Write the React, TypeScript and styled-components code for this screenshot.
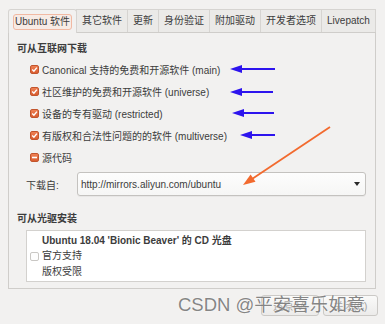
import * as React from 'react'
import styled, { createGlobalStyle } from 'styled-components';

const GlobalStyle = createGlobalStyle`
    body {
        margin: 0;
        background: #f2f1f0;
        font-family: "Liberation Sans", "Noto Sans CJK SC", sans-serif;
        font-size: 10px;
        color: #3c3c3c;
    }
`;

const Window = styled.div`
    position: relative;
    width: 385px;
    height: 324px;
    box-sizing: border-box;
    padding: 9px 0 0 8px;
    overflow: hidden;
`;

const TabBar = styled.div`
    display: flex;
    height: 23px;
`;

const Tab = styled.div<{ $active?: boolean }>`
    display: flex;
    align-items: center;
    box-sizing: border-box;
    padding: 0 ${p => (p.$active ? '4px' : '5px')};
    margin-right: -1px;
    border: 1px solid #d6d4d1;
    border-bottom: none;
    border-radius: ${p => (p.$active ? '3px 3px 0 0' : '0')};
    background: ${p => (p.$active ? '#f2f1f0' : '#ebeae8')};
    line-height: 12px;
    white-space: nowrap;
    position: relative;
    z-index: ${p => (p.$active ? 1 : 0)};
    margin-bottom: ${p => (p.$active ? '-1px' : '0')};
`;

const FocusRing = styled.span`
    padding: 1px 1px;
    border: 1px solid #f1b9a3;
    border-radius: 3px;
    background: #f7ebe5;
`;

const Panel = styled.div`
    width: 368px;
    box-sizing: border-box;
    border: 1px solid #cfcdca;
    padding: 10px 9px 6px 8px;
`;

const Heading = styled.div<{ $gap?: number }>`
    font-weight: bold;
    line-height: 12px;
    margin-top: ${p => p.$gap || 0}px;
`;

const CheckList = styled.div`
    margin-top: 3px;
    padding-left: 13px;
`;

const CheckRow = styled.div`
    display: flex;
    align-items: center;
    height: 22px;
    gap: 3px;
    white-space: nowrap;
`;

const Box = styled.span<{ $on?: boolean }>`
    display: inline-flex;
    align-items: center;
    justify-content: center;
    width: 9px;
    height: 9px;
    box-sizing: border-box;
    border-radius: 2px;
    border: 1px solid ${p => (p.$on ? '#c2552d' : '#c9c7c4')};
    background: ${p => (p.$on ? 'linear-gradient(#ef8053, #d95d30)' : '#fdfdfd')};
    flex: none;
`;

const SourceRow = styled.div`
    display: flex;
    align-items: center;
    margin-top: 4px;
    padding-left: 9px;
`;

const SourceLabel = styled.span`
    width: 51px;
    flex: none;
`;

const Dropdown = styled.div`
    flex: 1;
    height: 24px;
    box-sizing: border-box;
    display: flex;
    align-items: center;
    justify-content: space-between;
    padding: 0 5px 0 3px;
    border: 1px solid #c4c2bf;
    border-radius: 3px;
    background: linear-gradient(#fdfdfd, #f6f6f5);
    box-shadow: 0 1px 0 rgba(0, 0, 0, 0.04);
`;

const Caret = styled.span`
    width: 0;
    height: 0;
    border-left: 3.5px solid transparent;
    border-right: 3.5px solid transparent;
    border-top: 4px solid #2a2a2a;
`;

const ListBox = styled.div`
    margin: 5px 0 0 9px;
    height: 52px;
    box-sizing: border-box;
    border: 1px solid #d3d1ce;
    background: #ffffff;
    display: flex;
    align-items: center;
    padding-left: 3px;
    gap: 3px;
`;

const MediaLines = styled.div`
    line-height: 15.5px;
`;

const MediaTitle = styled.div`
    font-weight: bold;
`;

const ButtonBar = styled.div`
    display: flex;
    justify-content: flex-end;
    gap: 4px;
    margin-top: 6px;
    padding-right: 7px;
`;

const Button = styled.div<{ $w: number }>`
    width: ${p => p.$w}px;
    height: 21px;
    box-sizing: border-box;
    display: flex;
    align-items: center;
    justify-content: center;
    border: 1px solid #cbc9c6;
    border-radius: 3px;
    background: linear-gradient(#fafaf9, #ecebea);
    color: #a3a19e;
`;

const Watermark = styled.div`
    position: absolute;
    left: 178px;
    top: 293px;
    font-size: 18.5px;
    line-height: 24px;
    color: rgba(112, 112, 112, 0.85);
    text-shadow: 0 0 2px rgba(255, 255, 255, 0.8);
    white-space: nowrap;
`;

const Annotations = styled.svg`
    position: absolute;
    left: 0;
    top: 0;
    pointer-events: none;
`;

function CheckBox({ state }: { state: 'on' | 'mixed' | 'off' }) {
    return (
        <Box $on={state !== 'off'}>
            {state === 'on' && (
                <svg width="7" height="7" viewBox="0 0 7 7">
                    <path d="M1.2 3.6 L2.9 5.2 L5.9 1.6" stroke="#fff" strokeWidth="1.4" fill="none" />
                </svg>
            )}
            {state === 'mixed' && (
                <svg width="7" height="7" viewBox="0 0 7 7">
                    <rect x="1" y="2.7" width="5" height="1.6" fill="#fff" />
                </svg>
            )}
        </Box>
    );
}

const tabs = ['Ubuntu 软件', '其它软件', '更新', '身份验证', '附加驱动', '开发者选项', 'Livepatch'];

const components: [string, 'on' | 'mixed'][] = [
    ['Canonical 支持的免费和开源软件 (main)', 'on'],
    ['社区维护的免费和开源软件 (universe)', 'on'],
    ['设备的专有驱动 (restricted)', 'on'],
    ['有版权和合法性问题的的软件 (multiverse)', 'on'],
    ['源代码', 'mixed'],
];

// blue arrows: [tail x, tip x, y]
const blueArrows = [
    [275, 230, 69],
    [273, 230, 92],
    [274, 232, 113],
    [275, 240, 135],
];

function BlueArrow({ tail, tip, y }: { tail: number, tip: number, y: number }) {
    return <>
        <line x1={tail} y1={y} x2={tip + 8} y2={y} stroke="#2d14ee" strokeWidth="2" />
        <polygon points={`${tip},${y} ${tip + 12},${y - 4} ${tip + 12},${y + 4}`} fill="#2d14ee" />
    </>;
}

export default function App() {
    return (
        <Window>
            <GlobalStyle />
            <TabBar>
                {tabs.map((t, i) => i === 0
                    ? <Tab key={t} $active><FocusRing>{t}</FocusRing></Tab>
                    : <Tab key={t}>{t}</Tab>)}
            </TabBar>
            <Panel>
                <Heading>可从互联网下载</Heading>
                <CheckList>
                    {components.map(([label, state]) => (
                        <CheckRow key={label}>
                            <CheckBox state={state} />
                            <span>{label}</span>
                        </CheckRow>
                    ))}
                </CheckList>
                <SourceRow>
                    <SourceLabel>下载自:</SourceLabel>
                    <Dropdown>
                        <span>http://mirrors.aliyun.com/ubuntu</span>
                        <Caret />
                    </Dropdown>
                </SourceRow>
                <Heading $gap={17}>可从光驱安装</Heading>
                <ListBox>
                    <CheckBox state="off" />
                    <MediaLines>
                        <MediaTitle>Ubuntu 18.04 'Bionic Beaver' 的 CD 光盘</MediaTitle>
                        <div>官方支持</div>
                        <div>版权受限</div>
                    </MediaLines>
                </ListBox>
            </Panel>
            <ButtonBar>
                <Button $w={58}>还原(V)</Button>
                <Button $w={55}>关闭(C)</Button>
            </ButtonBar>
            <Annotations width="385" height="324">
                {blueArrows.map(([tail, tip, y]) => (
                    <BlueArrow key={y} tail={tail} tip={tip} y={y} />
                ))}
                <line x1="330" y1="127" x2="252" y2="179" stroke="#f26a2e" strokeWidth="1.8" />
                <polygon points="243,185 255.5,181.8 250.6,174.4" fill="#f26a2e" />
            </Annotations>
            <Watermark>CSDN @平安喜乐如意</Watermark>
        </Window>
    );
}
